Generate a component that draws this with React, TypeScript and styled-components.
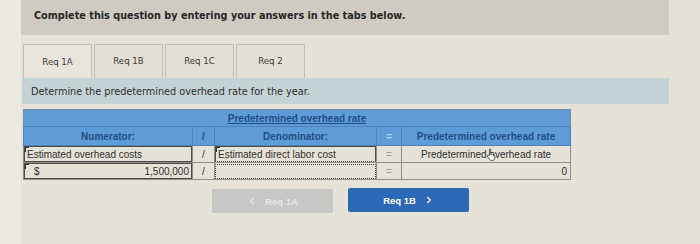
import { createGlobalStyle } from 'styled-components';
import styled from 'styled-components';
import { ChevronLeft, ChevronRight } from 'lucide-react';

const GlobalStyle = createGlobalStyle`
  html, body {
    margin: 0;
    padding: 0;
    background: #e8e4da;
  }
`;

const tabs = ['Req 1A', 'Req 1B', 'Req 1C', 'Req 2'];
const colWidths = [169, 22, 162, 25, 169];

export default function App() {
  return (
    <>
      <GlobalStyle />
      <Page>
        <TopBar>Complete this question by entering your answers in the tabs below.</TopBar>
        <TabRow>
          {tabs.map((t, i) => (
            <Tab key={t} $active={i === 0}>
              {t}
            </Tab>
          ))}
        </TabRow>
        <Instruction>Determine the predetermined overhead rate for the year.</Instruction>
        <Table>
          <colgroup>
            {colWidths.map((w, i) => (
              <Col key={i} $w={w} />
            ))}
          </colgroup>
          <tbody>
            <tr>
              <TitleCell colSpan={5}>
                <u>Predetermined overhead rate</u>
              </TitleCell>
            </tr>
            <tr>
              <HeadCell>Numerator:</HeadCell>
              <HeadCell>/</HeadCell>
              <HeadCell>Denominator:</HeadCell>
              <HeadCell $light>=</HeadCell>
              <HeadCell>Predetermined overhead rate</HeadCell>
            </tr>
            <tr>
              <BodyCell>
                <InputBox>Estimated overhead costs</InputBox>
              </BodyCell>
              <SymbolCell>/</SymbolCell>
              <BodyCell>
                <InputBox $dottedBottom>Estimated direct labor cost</InputBox>
              </BodyCell>
              <SymbolCell $light>=</SymbolCell>
              <BodyCell $align="center">
                <Plain>
                  Predetermined overhead rate
                  <Cursor viewBox="0 0 12 14">
                    <path
                      d="M4 1.2c.7 0 1.1.5 1.1 1.1v4.3l.6-.2c.6 0 1 .4 1 .9l.5-.1c.6 0 1 .4 1 .9l.4-.1c.6 0 1 .4 1 1V11c0 1.4-1.1 2.5-2.5 2.5H6c-.9 0-1.6-.4-2.1-1.1L1.4 8.9c-.4-.5-.2-1.1.3-1.4.4-.2.9-.1 1.2.2l.9 1V2.3c0-.6.4-1.1 1.1-1.1z"
                      fill="#f4f2ec"
                      stroke="#3a3a3a"
                      strokeWidth="0.9"
                    />
                  </Cursor>
                </Plain>
              </BodyCell>
            </tr>
            <tr>
              <BodyCell>
                <InputBox $split>
                  <span>$</span>
                  <span>1,500,000</span>
                </InputBox>
              </BodyCell>
              <SymbolCell>/</SymbolCell>
              <BodyCell>
                <EmptyInput />
              </BodyCell>
              <SymbolCell $light>=</SymbolCell>
              <BodyCell $align="right">
                <Plain>0</Plain>
              </BodyCell>
            </tr>
          </tbody>
        </Table>
        <NavRow>
          <NavButton $disabled>
            <ChevronLeft size={10} strokeWidth={3} />
            Req 1A
          </NavButton>
          <NavButton>
            Req 1B
            <ChevronRight size={10} strokeWidth={3} />
          </NavButton>
        </NavRow>
      </Page>
    </>
  );
}

const Page = styled.div`
  width: 700px;
  height: 244px;
  box-sizing: border-box;
  padding-left: 21px;
  display: flex;
  flex-direction: column;
  background: linear-gradient(90deg, #ece9e1 0, #ece9e1 21px, #e7e2d7 21px);
  overflow: hidden;
`;

const TopBar = styled.div`
  width: 648px;
  height: 35px;
  box-sizing: border-box;
  padding: 0 0 4px 13px;
  display: flex;
  align-items: center;
  background: #cfcbc3;
  font-family: 'DejaVu Sans', Verdana, sans-serif;
  font-weight: bold;
  font-size: 9.7px;
  color: #262626;
`;

const TabRow = styled.div`
  display: flex;
  gap: 2px;
  margin: 9px 0 0 2px;
`;

const Tab = styled.div<{ $active?: boolean }>`
  width: 69px;
  height: ${(p) => (p.$active ? 36 : 34)}px;
  box-sizing: border-box;
  border: 1px solid #c3beb4;
  border-bottom: none;
  background: ${(p) => (p.$active ? '#e9e5dc' : '#e4dfd4')};
  display: flex;
  align-items: center;
  justify-content: center;
  padding-bottom: 2px;
  font-family: 'DejaVu Sans', Verdana, sans-serif;
  font-size: 8.6px;
  color: #3a3a3a;
  align-self: flex-start;
`;

const Instruction = styled.div`
  width: 647px;
  height: 26px;
  box-sizing: border-box;
  margin: -2px 0 0 1px;
  padding: 1px 0 0 9px;
  display: flex;
  align-items: center;
  background: #c4d3d6;
  font-family: 'DejaVu Sans', Verdana, sans-serif;
  font-size: 9.7px;
  color: #2d2d2d;
`;

const Table = styled.table`
  margin: 5px 0 0 2px;
  width: 547px;
  border-collapse: collapse;
  table-layout: fixed;
  font-family: 'Liberation Sans', Arial, sans-serif;
  font-size: 10px;
  border: 1px solid #6f8fb0;
`;

const Col = styled.col<{ $w: number }>`
  width: ${(p) => p.$w}px;
`;

const TitleCell = styled.td`
  height: 16px;
  padding: 0;
  background: #5f9cd7;
  text-align: center;
  font-weight: bold;
  color: #1f4f86;
  border-bottom: 1px solid #4d82b8;
`;

const HeadCell = styled.td<{ $light?: boolean }>`
  height: 18px;
  padding: 0;
  background: #5f9cd7;
  text-align: center;
  font-weight: bold;
  white-space: nowrap;
  color: ${(p) => (p.$light ? '#b9d3ee' : '#1f4f86')};
  border: 1px solid #4d82b8;
`;

const BodyCell = styled.td<{ $align?: string }>`
  height: 15px;
  padding: 0;
  background: #e6e2d7;
  border: 1px solid #8f8e89;
  text-align: ${(p) => p.$align || 'left'};
  color: #2f2f2f;
`;

const SymbolCell = styled.td<{ $light?: boolean }>`
  padding: 0;
  background: #e6e2d7;
  border: 1px solid #8f8e89;
  text-align: center;
  color: ${(p) => (p.$light ? '#9c9a94' : '#333')};
`;

const InputBox = styled.div<{ $split?: boolean; $dottedBottom?: boolean }>`
  position: relative;
  height: 16px;
  box-sizing: border-box;
  border: 1px solid #4a4a4a;
  border-bottom-style: ${(p) => (p.$dottedBottom ? 'dotted' : 'solid')};
  display: flex;
  align-items: center;
  justify-content: ${(p) => (p.$split ? 'space-between' : 'flex-start')};
  padding: ${(p) => (p.$split ? '0 2px 0 9px' : '0 2px')};
  white-space: nowrap;
  &::before {
    content: '';
    position: absolute;
    left: 0;
    top: 0;
    width: 3px;
    height: 4px;
    border-left: 1px solid #2f2f2f;
    border-top: 1px solid #2f2f2f;
  }
`;

const EmptyInput = styled.div`
  height: 15px;
  box-sizing: border-box;
  border: 1px dotted #45454f;
`;

const Plain = styled.span`
  position: relative;
  padding: 0 3px;
  white-space: nowrap;
`;

const Cursor = styled.svg`
  position: absolute;
  left: 68px;
  top: -1px;
  width: 11px;
  height: 13px;
`;

const NavRow = styled.div`
  display: flex;
  gap: 15px;
  margin: 8px 0 0 191px;
  align-items: flex-start;
`;

const NavButton = styled.div<{ $disabled?: boolean }>`
  width: 121px;
  height: 24px;
  margin-top: ${(p) => (p.$disabled ? 1 : 0)}px;
  border-radius: 2px;
  display: flex;
  align-items: center;
  justify-content: center;
  gap: 8px;
  background: ${(p) => (p.$disabled ? '#c6c8c6' : '#2b69b6')};
  color: ${(p) => (p.$disabled ? '#e6e8e6' : '#ffffff')};
  font-family: 'Liberation Sans', Arial, sans-serif;
  font-weight: bold;
  font-size: 9.5px;
`;
